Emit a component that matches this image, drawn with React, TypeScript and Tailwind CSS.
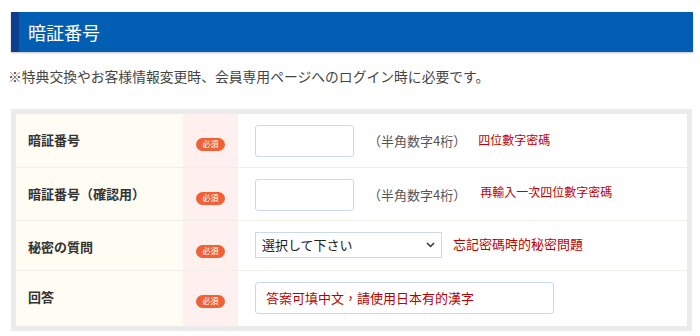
import React from 'react';

const jp = { fontFamily: '"Noto Sans CJK JP", "Noto Sans", sans-serif' };
const tc = { fontFamily: '"Noto Sans CJK TC", "Noto Sans", sans-serif' };

function Badge() {
  return (
    <span className="inline-flex h-[13px] w-[29px] items-center justify-center rounded-full bg-[#ef6236] text-[8px] leading-none text-white">
      必須
    </span>
  );
}

function Row({
  label,
  children,
  last,
}: {
  label: string;
  children: React.ReactNode;
  last?: boolean;
}) {
  return (
    <div className={`flex h-full ${last ? '' : 'border-b border-[#f1efe9]'}`}>
      <div className="w-[167px] shrink-0 bg-[#fffdf3] pl-[12px] pt-[16px] text-[13px] font-bold text-[#333]">
        {label}
      </div>
      <div className="flex w-[55px] shrink-0 justify-center bg-[#fdf0ee] pt-[24px]">
        <Badge />
      </div>
      <div className="flex flex-1 items-start bg-white pl-[17px] pt-[11px]">{children}</div>
    </div>
  );
}

export default function App() {
  return (
    <div className="h-[336px] w-[700px] bg-white text-[#333]" style={jp}>
      <div className="pt-[12px] pl-[11px] pr-[7px]">
        <div className="flex h-[40px] items-center border-l-[8px] border-[#0b3e8c] bg-[#015eb2] pl-[9px] shadow-[0_1px_2px_rgba(0,0,0,0.25)]">
          <span className="text-[18px] text-white">暗証番号</span>
        </div>
      </div>
      <p className="mt-[14px] pl-[8px] text-[13.8px] text-[#444]">
        ※特典交換やお客様情報変更時、会員専用ページへのログイン時に必要です。
      </p>
      <div className="ml-[11px] mr-[8px] mt-[22px] bg-[#ebebeb] p-[5px]">
        <div className="flex flex-col">
          <div className="h-[54px]">
            <Row label="暗証番号">
              <div className="h-[32px] w-[99px] rounded-[3px] border border-[#c9d9e6]" />
              <span className="ml-[14px] mt-[6px] text-[13px] text-[#555]">（半角数字4桁）</span>
              <span className="ml-[12px] mt-[6px] text-[12px] text-[#c00000]" style={tc}>
                四位數字密碼
              </span>
            </Row>
          </div>
          <div className="h-[53px]">
            <Row label="暗証番号（確認用）">
              <div className="h-[32px] w-[99px] rounded-[3px] border border-[#c9d9e6]" />
              <span className="ml-[14px] mt-[6px] text-[13px] text-[#555]">（半角数字4桁）</span>
              <span className="ml-[14px] mt-[4px] text-[12px] text-[#c00000]" style={tc}>
                再輸入一次四位數字密碼
              </span>
            </Row>
          </div>
          <div className="h-[50px]">
            <Row label="秘密の質問">
              <div className="flex h-[26px] w-[187px] items-center justify-between border border-[#c9d9e6] px-[6px] text-[13px] text-[#222]">
                <span>選択して下さい</span>
                <svg width="9" height="6" viewBox="0 0 9 6" fill="none" stroke="#333" strokeWidth="1.5">
                  <path d="M1 1l3.5 3.5L8 1" />
                </svg>
              </div>
              <span className="ml-[11px] mt-[2px] text-[13px] text-[#c00000]" style={tc}>
                忘記密碼時的秘密問題
              </span>
            </Row>
          </div>
          <div className="h-[55px]">
            <Row label="回答" last>
              <div
                className="flex h-[32px] w-[299px] items-center rounded-[3px] border border-[#c9d9e6] pl-[10px] text-[13px] text-[#c00000]"
                style={tc}
              >
                答案可填中文，請使用日本有的漢字
              </div>
            </Row>
          </div>
        </div>
      </div>
    </div>
  );
}
